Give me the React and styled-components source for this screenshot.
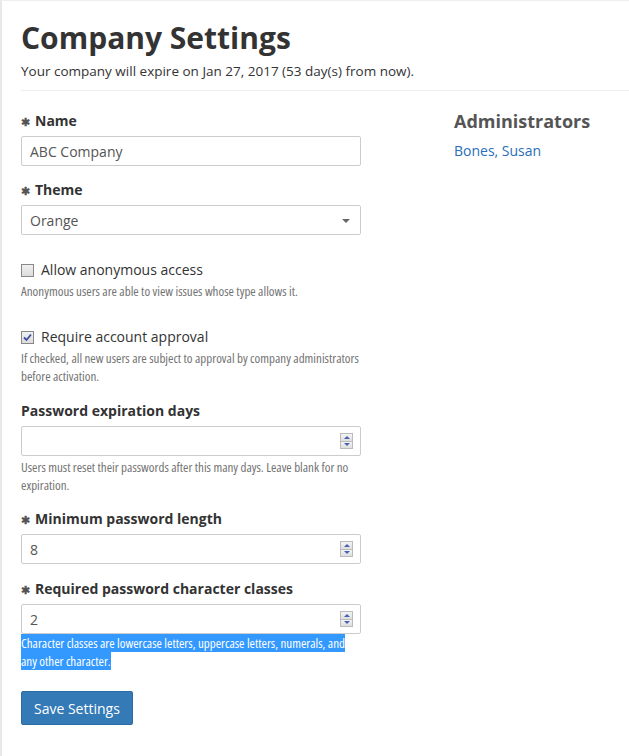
import React from 'react';
import styled, { createGlobalStyle } from 'styled-components';

const GlobalStyle = createGlobalStyle`
  html, body {
    margin: 0;
    padding: 0;
    background: #fff;
  }
  body {
    font-family: 'Open Sans', 'Noto Sans', sans-serif;
    font-size: 14px;
    color: #333;
  }
`;

const Page = styled.div`
  min-height: 756px;
  box-sizing: border-box;
  border-left: 2px solid #e8e8e8;
  border-top: 1px solid #eee;
  padding: 17px 0 30px 19px;
`;

const Title = styled.h1`
  margin: 0;
  font-size: 30px;
  font-weight: 700;
  line-height: 40px;
  color: #333;
`;

const Subtitle = styled.p`
  margin: 3px 0 0 0;
  font-size: 13.5px;
  line-height: 20px;
  color: #333;
`;

const Rule = styled.hr`
  margin: 9px 0 0 0;
  border: 0;
  border-top: 1px solid #eee;
`;

const Columns = styled.div`
  display: grid;
  grid-template-columns: 433px 1fr;
  padding-top: 20px;
`;

const Form = styled.form`
  display: flex;
  flex-direction: column;
`;

const Group = styled.div`
  display: flex;
  flex-direction: column;
  margin-bottom: ${(p) => p.gap || 16}px;
`;

const Label = styled.label`
  display: flex;
  align-items: center;
  font-weight: 700;
  font-size: 14px;
  line-height: 20px;
  margin-bottom: 5px;
  color: #333;
`;

const Star = styled.span`
  font-size: 11px;
  color: #555;
  margin-right: 5px;
  line-height: 1;
`;

const InputBox = styled.div`
  position: relative;
  width: 340px;
  height: 30px;
  box-sizing: border-box;
  border: 1px solid #ccc;
  border-radius: 2px;
  background: #fff;
  display: flex;
  align-items: center;
  padding: 0 8px;
  font-size: 14px;
  color: #555;
`;

const Caret = styled.span`
  position: absolute;
  right: 10px;
  top: 13px;
  width: 0;
  height: 0;
  border-left: 4px solid transparent;
  border-right: 4px solid transparent;
  border-top: 4px solid #666;
`;

const Spinner = styled.span`
  position: absolute;
  right: 7px;
  top: 6px;
  width: 13px;
  height: 16px;
  display: flex;
  flex-direction: column;
  border: 1px solid #bbb;
  box-sizing: border-box;
`;

const SpinHalf = styled.span`
  flex: 1;
  display: flex;
  align-items: center;
  justify-content: center;
  background: linear-gradient(#f4f4f4, #dedede);
  border-top: ${(p) => (p.down ? '1px solid #bbb' : '0')};

  &::after {
    content: '';
    border-left: 3px solid transparent;
    border-right: 3px solid transparent;
    ${(p) =>
      p.down ? 'border-top: 3px solid #4a5fb5;' : 'border-bottom: 3px solid #4a5fb5;'}
  }
`;

const CheckRow = styled.div`
  display: flex;
  align-items: center;
  font-size: 14px;
  line-height: 20px;
  color: #333;
`;

const Box = styled.span`
  width: 13px;
  height: 13px;
  box-sizing: border-box;
  border: 1px solid #888;
  background: linear-gradient(#f0f0f0, #dcdcdc);
  margin-right: 7px;
  display: flex;
  align-items: center;
  justify-content: center;
`;

const Help = styled.div`
  font-family: 'Open Sans', sans-serif;
  font-stretch: 75%;
  font-size: 13px;
  line-height: 18px;
  color: #737373;
  width: 340px;
  margin-top: ${(p) => p.top ?? 2}px;
`;

const Selected = styled.span`
  background: #3399ff;
  color: #fff;
`;

const SaveButton = styled.button`
  align-self: flex-start;
  margin-top: 4px;
  height: 34px;
  padding: 0 12px;
  border: 1px solid #2e6da4;
  border-radius: 2px;
  background: #337ab7;
  color: #fff;
  font-family: 'Open Sans', sans-serif;
  font-size: 14px;
`;

const Side = styled.aside`
  display: flex;
  flex-direction: column;
`;

const SideTitle = styled.h3`
  margin: -1px 0 0 0;
  font-size: 18px;
  font-weight: 700;
  line-height: 22px;
  color: #555;
`;

const AdminLink = styled.a`
  margin-top: 9px;
  color: #2a6ebb;
  font-size: 14px;
  line-height: 20px;
  text-decoration: none;
`;

const NumberInput = ({ value }) => (
  <InputBox>
    {value}
    <Spinner>
      <SpinHalf />
      <SpinHalf down />
    </Spinner>
  </InputBox>
);

const Check = ({ checked }) => (
  <Box>
    {checked && (
      <svg width="9" height="9" viewBox="0 0 9 9">
        <path d="M1 4.5 L3.5 7 L8 1.5" fill="none" stroke="#3d4f9a" strokeWidth="1.8" />
      </svg>
    )}
  </Box>
);

export default function App() {
  return (
    <Page>
      <GlobalStyle />
      <Title>Company Settings</Title>
      <Subtitle>Your company will expire on Jan 27, 2017 (53 day(s) from now).</Subtitle>
      <Rule />
      <Columns>
        <Form onSubmit={(e) => e.preventDefault()}>
          <Group gap={14}>
            <Label><Star>✱</Star>Name</Label>
            <InputBox>ABC Company</InputBox>
          </Group>
          <Group gap={25}>
            <Label><Star>✱</Star>Theme</Label>
            <InputBox>
              Orange
              <Caret />
            </InputBox>
          </Group>
          <Group gap={27}>
            <CheckRow><Check />Allow anonymous access</CheckRow>
            <Help>Anonymous users are able to view issues whose type allows it.</Help>
          </Group>
          <Group gap={16}>
            <CheckRow><Check checked />Require account approval</CheckRow>
            <Help>
              If checked, all new users are subject to approval by company administrators
              before activation.
            </Help>
          </Group>
          <Group gap={15}>
            <Label>Password expiration days</Label>
            <NumberInput value="" />
            <Help>Users must reset their passwords after this many days. Leave blank for no expiration.</Help>
          </Group>
          <Group gap={15}>
            <Label><Star>✱</Star>Minimum password length</Label>
            <NumberInput value="8" />
          </Group>
          <Group gap={17}>
            <Label><Star>✱</Star>Required password character classes</Label>
            <NumberInput value="2" />
            <Help top={0}>
              <Selected>
                Character classes are lowercase letters, uppercase letters, numerals, and any
                other character.
              </Selected>
            </Help>
          </Group>
          <SaveButton type="submit">Save Settings</SaveButton>
        </Form>
        <Side>
          <SideTitle>Administrators</SideTitle>
          <AdminLink href="#">Bones, Susan</AdminLink>
        </Side>
      </Columns>
    </Page>
  );
}
